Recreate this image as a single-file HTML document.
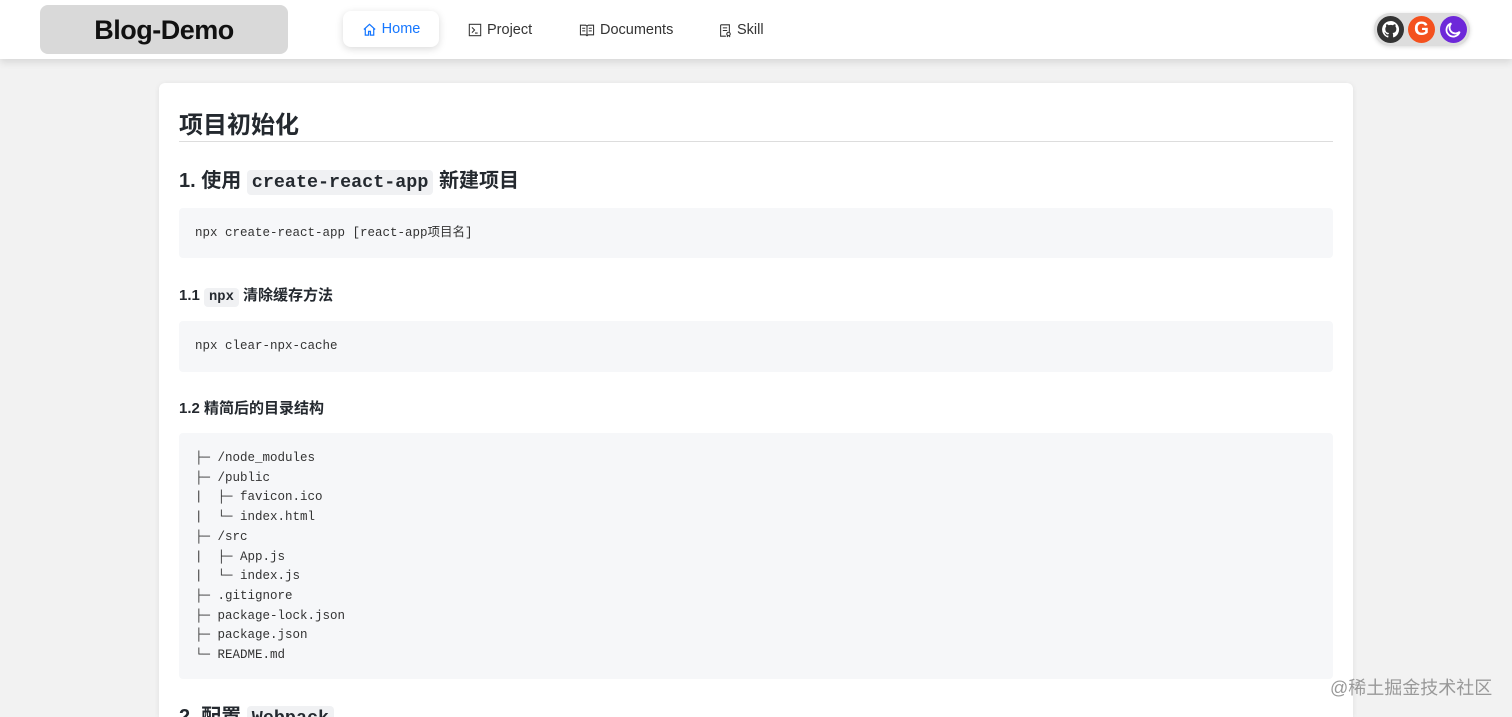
<!DOCTYPE html>
<html><head><meta charset="utf-8"><style>
*{box-sizing:border-box;margin:0;padding:0}
html,body{width:1512px;height:717px;overflow:hidden}
body{background:#f2f2f2;font-family:"Liberation Sans","Noto Sans CJK SC",sans-serif;color:#24292f;position:relative}
.hdr{position:absolute;left:0;top:0;width:1512px;height:59px;background:#fff;box-shadow:0 3px 8px rgba(0,0,0,.12)}
.logo{position:absolute;left:40px;top:5px;width:248px;height:49px;background:#d9d9d9;border-radius:8px;font-weight:bold;font-size:27px;text-align:center;line-height:51px;color:#111;letter-spacing:-0.5px}
.nav{position:absolute;top:12px;height:36px;line-height:36px;font-size:14.5px;color:#333;display:flex;align-items:center;gap:5px}
.home{left:343px;top:11px;width:96px;justify-content:center;background:#fff;border-radius:8px;box-shadow:0 2px 8px rgba(0,0,0,.15);color:#1677ff}
.icons{position:absolute;left:1374px;top:13px;width:96px;height:33px;background:#ddd;border-radius:16px;box-shadow:0 1px 4px rgba(0,0,0,.15)}
.ic{position:absolute;top:3px;width:27px;height:27px;border-radius:50%}
.card{position:absolute;left:159px;top:83px;width:1194px;height:634px;overflow:hidden;background:#fff;border-radius:6px 6px 0 0;box-shadow:0 1px 6px rgba(0,0,0,.08);padding:0 20px}
h1{position:absolute;left:20px;top:22px;font-size:24px;font-weight:bold}
.hr{position:absolute;left:20px;right:20px;top:58px;height:1px;background:#ddd}
h2{position:absolute;left:20px;font-size:20px;font-weight:bold;white-space:nowrap}
h3{position:absolute;left:20px;font-size:15px;font-weight:bold}
code.i{font-family:"Liberation Mono","Noto Sans CJK SC",monospace;background:#f0f1f3;padding:2px 5px;border-radius:4px;font-size:.92em}
pre{position:absolute;left:20px;right:20px;background:#f6f7f9;border-radius:4px;padding:0 16px;font-family:"Liberation Mono","Noto Sans CJK SC",monospace;font-size:12.5px;color:#333;line-height:19.7px}
.wm{position:absolute;left:1330px;top:674px;font-size:18px;color:#999}
</style></head><body>
<div class="hdr">
<div class="logo">Blog-Demo</div>
<div class="nav home"><svg width="15" height="15" viewBox="0 0 16 16" fill="none" stroke="#1677ff" stroke-width="1.3"><path d="M2 8L8 2.5 14 8M3.5 7v7h3.5v-4h2v4h3.5V7"/></svg>Home</div>
<div class="nav" style="left:468px"><svg width="14" height="14" viewBox="0 0 16 16" fill="none" stroke="#333" stroke-width="1.2"><rect x="1.5" y="1.5" width="13" height="13"/><path d="M4.5 5l3 3-3 3M8 11.5h3"/></svg>Project</div>
<div class="nav" style="left:579px"><svg width="16" height="14" viewBox="0 0 18 16" fill="none" stroke="#333" stroke-width="1.2"><path d="M1.5 2.5h6l1.5 1 1.5-1h6v11h-6l-1.5 1-1.5-1h-6z M9 3.5v10M3.5 6h3.5M3.5 9h3.5M11 6h3.5M11 9h3.5"/></svg>Documents</div>
<div class="nav" style="left:718px"><svg width="14" height="15" viewBox="0 0 16 16" fill="none" stroke="#333" stroke-width="1.2"><path d="M3 1.5h10v8M3 1.5v13h6M5.5 5h5M5.5 8h5"/><circle cx="12" cy="12" r="2"/><path d="M11 14l-.5 1.5M13 14l.5 1.5"/></svg>Skill</div>
<div class="icons">
<div class="ic" style="left:3px;background:#333"><svg width="27" height="27" viewBox="0 0 24 24"><path fill="#fff" d="M12 4.5a7.5 7.5 0 0 0-2.4 14.6c.4.1.5-.2.5-.4v-1.4c-2.1.5-2.5-1-2.5-1-.3-.9-.8-1.1-.8-1.1-.7-.5.1-.5.1-.5.8.1 1.2.8 1.2.8.7 1.2 1.8.8 2.2.6.1-.5.3-.8.5-1-1.7-.2-3.4-.8-3.4-3.7 0-.8.3-1.5.8-2-.1-.2-.3-1 .1-2 0 0 .6-.2 2.1.8a7 7 0 0 1 3.8 0c1.4-1 2.1-.8 2.1-.8.4 1 .2 1.8.1 2 .5.5.8 1.2.8 2 0 2.9-1.8 3.5-3.4 3.7.3.2.5.7.5 1.4v2.1c0 .2.1.5.5.4A7.5 7.5 0 0 0 12 4.5z"/></svg></div>
<div class="ic" style="left:34px;background:#f4511e;color:#fff;font-weight:bold;font-size:19px;text-align:center;line-height:27px">G</div>
<div class="ic" style="left:66px;background:#6d28d9"><svg width="27" height="27" viewBox="0 0 24 24"><path fill="none" stroke="#fff" stroke-width="1.6" d="M10 6.5a6 6 0 1 0 7.5 7.5A5 5 0 0 1 10 6.5z"/></svg></div>
</div>
</div>
<div class="card">
<h1>项目初始化</h1>
<div class="hr"></div>
<h2 style="top:81px">1. 使用 <code class="i">create-react-app</code> 新建项目</h2>
<pre style="top:125px;height:50px;line-height:50px">npx create-react-app [react-app项目名]</pre>
<h3 style="top:201px">1.1 <code class="i">npx</code> 清除缓存方法</h3>
<pre style="top:238px;height:51px;line-height:51px">npx clear-npx-cache</pre>
<h3 style="top:314px">1.2 精简后的目录结构</h3>
<pre style="top:350px;height:246px;padding-top:16px">├─ /node_modules
├─ /public
|  ├─ favicon.ico
|  └─ index.html
├─ /src
|  ├─ App.js
|  └─ index.js
├─ .gitignore
├─ package-lock.json
├─ package.json
└─ README.md</pre>
<h2 style="top:617px">2. 配置 <code class="i">Webpack</code></h2>
</div>
<div class="wm">@稀土掘金技术社区</div>
</body></html>
